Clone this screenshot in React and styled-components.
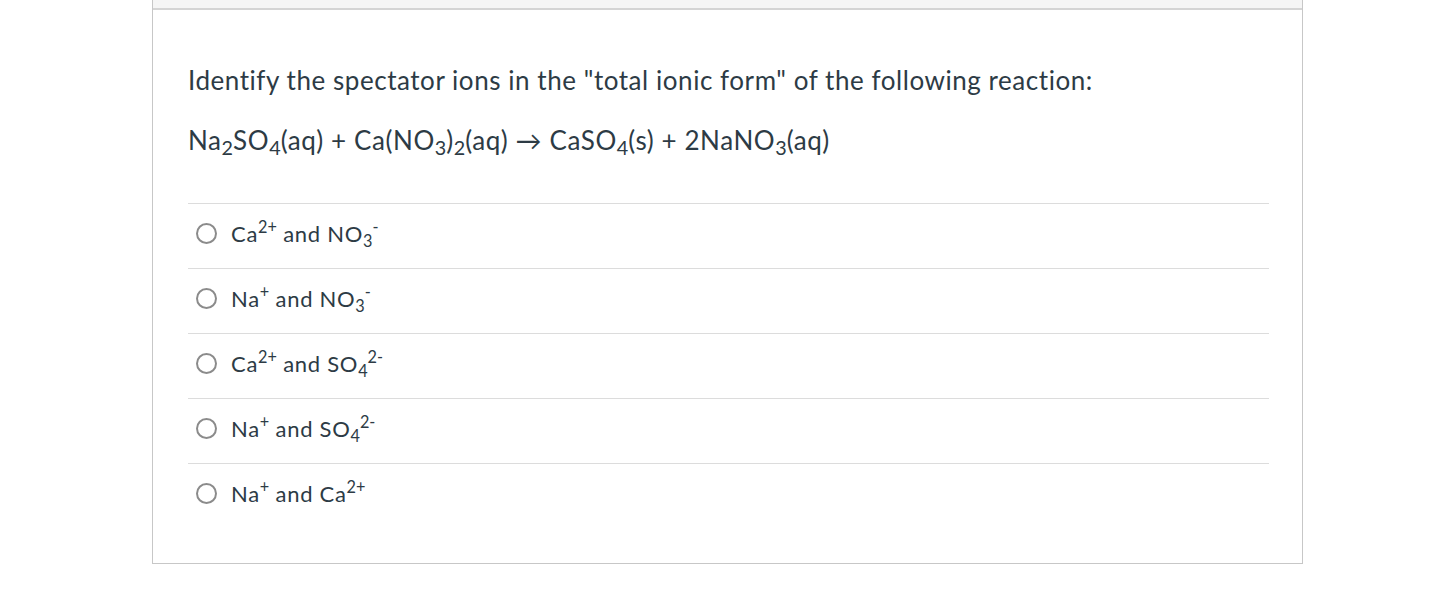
import styled, { createGlobalStyle } from "styled-components";

const GlobalStyle = createGlobalStyle`
    body {
        margin: 0;
        background: #fff;
        font-family: Lato, "Open Sans", "Liberation Sans", sans-serif;
        color: #2d3b45;
    }
`;

const Page = styled.div`
    padding-left: 152px;
    width: 1433px;
    height: 595px;
    box-sizing: border-box;
`;

const Card = styled.div`
    width: 1151px;
    box-sizing: border-box;
    border: 1px solid #c7c7c7;
    border-top: none;
    background: #fff;
`;

const Header = styled.div`
    height: 8px;
    background: #f5f5f5;
    border-bottom: 2px solid #d4d4d4;
`;

const Body = styled.div`
    padding: 55px 35px 35px 35px;
`;

const Question = styled.p`
    margin: 0;
    font-size: 26px;
    letter-spacing: 0.55px;
    line-height: 30px;
`;

const Equation = styled.p`
    margin: 30px 0 0 0;
    font-size: 26px;
    letter-spacing: 0.6px;
    line-height: 30px;

    sub {
        font-size: 0.76em;
        vertical-align: -0.25em;
        line-height: 0;
        letter-spacing: 0;
    }
`;

const Answers = styled.div`
    margin-top: 48px;
    width: 1081px;
`;

const Answer = styled.label`
    display: flex;
    align-items: center;
    gap: 14px;
    border-top: 1px solid #dcdcdc;
    padding-left: 8px;
    padding-bottom: 5px;
    box-sizing: border-box;
    height: 65px;
    font-size: 22px;
    letter-spacing: 0.7px;

    sup, sub {
        font-size: 0.74em;
        line-height: 0;
        letter-spacing: 0;
    }
    sup {
        vertical-align: 0.55em;
    }
    sub {
        vertical-align: -0.3em;
    }
`;

const Radio = styled.span`
    width: 17px;
    height: 17px;
    border: 2px solid #8b8b8b;
    border-radius: 50%;
    flex: none;
`;

const options = [
    <>Ca<sup>2+</sup> and NO<sub>3</sub><sup>-</sup></>,
    <>Na<sup>+</sup> and NO<sub>3</sub><sup>-</sup></>,
    <>Ca<sup>2+</sup> and SO<sub>4</sub><sup>2-</sup></>,
    <>Na<sup>+</sup> and SO<sub>4</sub><sup>2-</sup></>,
    <>Na<sup>+</sup> and Ca<sup>2+</sup></>,
];

export default function App() {
    return (
        <Page>
            <GlobalStyle />
            <Card>
                <Header />
                <Body>
                    <Question>
                        Identify the spectator ions in the "total ionic form" of the following reaction:
                    </Question>
                    <Equation>
                        Na<sub>2</sub>SO<sub>4</sub>(aq) + Ca(NO<sub>3</sub>)<sub>2</sub>(aq) → CaSO<sub>4</sub>(s) + 2NaNO<sub>3</sub>(aq)
                    </Equation>
                    <Answers>
                        {options.map((opt, i) => (
                            <Answer key={i}>
                                <Radio />
                                <span>{opt}</span>
                            </Answer>
                        ))}
                    </Answers>
                </Body>
            </Card>
        </Page>
    );
}
